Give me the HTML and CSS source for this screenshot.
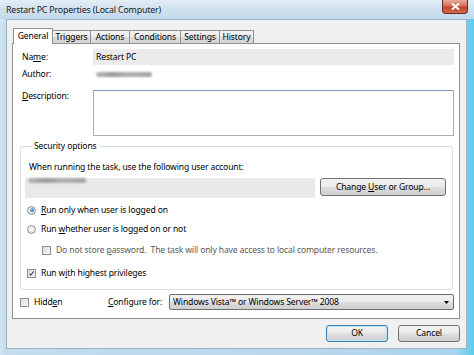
FILE: index.html
```html
<html>
<head>
<meta http-equiv="content-type" content="text/html; charset=utf-8">
<link rel="stylesheet" href="styles.css">
<title>Restart PC Properties (Local Computer)</title>
</head>
<body>
<div class=window>
<div class=titlebar>
<span class=title>Restart PC Properties (Local Computer)</span>
<div class=close><svg width=11 height=9 viewBox="0 0 11 9"><path d="M2 1.5L9 7.5M9 1.5L2 7.5" stroke="#fff" stroke-width="2"/></svg></div>
</div>
<div class=client>
<div class=tabs>
<div class="tab here t1">General</div><div class="tab t2">Triggers</div><div class="tab t3">Actions</div><div class="tab t4">Conditions</div><div class="tab t5">Settings</div><div class="tab t6">History</div>
</div>
<div class=panel>
<div class="row namerow"><span class=label>Na<u>m</u>e:</span><div class="field ro">Restart PC</div></div>
<div class="row authrow"><span class=label>Author:</span><span class="smudge short"></span></div>
<div class="row descrow"><span class=label><u>D</u>escription:</span><div class=memo></div></div>
<fieldset class=group>
<legend>Security options</legend>
<div class=account>When running the task, use the following user account:</div>
<div class=userrow><div class="field user"><span class="smudge long"></span></div><div class="btn change">Change <u>U</u>ser or Group...</div></div>
<div class="opt o1"><span class="radio on"></span><span><u>R</u>un only when user is logged on</span></div>
<div class="opt o2"><span class=radio></span><span>Run <u>w</u>hether user is logged on or not</span></div>
<div class="opt o3 dim"><span class=check></span><span>Do not store <u>p</u>assword.&nbsp; The task will only have access to local computer resources.</span></div>
<div class="opt o4"><span class="check on"><svg width=9 height=9 viewBox="0 0 9 9"><path d="M1.8 4.6L3.6 6.6L7.4 1.8" fill="none" stroke="#3d4e79" stroke-width="1.4"/></svg></span><span>Run w<u>i</u>th highest privileges</span></div>
</fieldset>
<div class=cfgrow>
<div class="opt hidden"><span class=check></span><span>Hidd<u>e</u>n</span></div>
<span class=cfglabel><u>C</u>onfigure for:</span>
<div class=combo><span>Windows Vista™ or Windows Server™ 2008</span><svg width=5 height=3 viewBox="0 0 5 3"><path d="M0 0H5L2.5 3Z" fill="#000"/></svg></div>
</div>
</div>
<div class=buttons>
<div class="btn ok">OK</div>
<div class="btn cancel">Cancel</div>
</div>
</div>
</div>
</body>
</html>
```
FILE: styles.css
```css
html,body{margin:0;padding:0}
body{width:474px;height:355px;overflow:hidden;font-family:"Noto Sans","DejaVu Sans",sans-serif;font-size:8.6px;letter-spacing:-0.15px;color:#000;background:#9fcbe8}
u{text-decoration:underline;text-underline-offset:1px}
.window{width:474px;height:355px;display:flex;flex-direction:column;box-sizing:border-box;
background:linear-gradient(to right,#d4e6f3 0,#c3dcee 6px,#bcd7ec 60%,#a9d4ef 96%,#5ccbee 100%)}
.titlebar{height:19px;flex:none;display:flex;align-items:center;padding-left:6px;
background:linear-gradient(to bottom,#e3eef7 0,#cfe1ef 50%,#c2d9ec 100%)}
.title{font-size:8.8px;line-height:19px;padding-top:2px;color:#1a1a1a}
.close{margin-left:auto;margin-right:6px;align-self:flex-start;width:26px;height:14px;box-sizing:border-box;
border:1px solid #6d2b22;border-top:0;border-radius:0 0 4px 4px;display:flex;align-items:center;justify-content:center;
background:linear-gradient(to bottom,#e9a99c 0,#d6705d 45%,#c2412c 55%,#d26a4d 100%)}
.client{flex:1;margin:0 7px 6px 6px;background:#f0f0f0;border:1px solid #9fb2c2;box-sizing:border-box;
padding:8px 6px 0 5px;display:flex;flex-direction:column}
.tabs{display:flex;align-items:flex-end;height:15px;padding-left:1px}
.tab{box-sizing:border-box;height:13px;line-height:12px;text-align:center;border:1px solid #8d9198;border-bottom:0;
margin-left:-1px;background:linear-gradient(to bottom,#f4f4f4 0,#e9e9e9 50%,#dcdcdc 51%,#d5d5d5 100%)}
.tab.here{height:16px;margin-bottom:-1px;background:#fff;position:relative;z-index:1;line-height:14px;margin-left:0}
.t1{width:40px}.t2{width:39px}.t3{width:40px}.t4{width:52px}.t5{width:40px}.t6{width:35px}
.panel{height:276px;box-sizing:border-box;border:1px solid #8d9198;background:#fff;padding:5px 5px 0 7px}
.row{display:flex}
.label{width:73px;flex:none;padding-left:2px;box-sizing:border-box}
.namerow{height:16px;align-items:center}
.field{background:#ebebeb;flex:1;height:16px;line-height:16px;padding-left:3px}
.authrow{height:16px;margin-top:1px;align-items:center}
.smudge{display:inline-block;height:5px;border-radius:3px;background:linear-gradient(to right,#b8b8b8 0,#9a9a9a 30%,#b0b0b0 60%,#a4a4a4 100%);filter:blur(1.1px)}
.smudge.short{width:56px;margin-left:3px}
.smudge.long{width:58px;margin-left:0;vertical-align:middle}
.descrow{margin-top:8px;height:46px}
.descrow .label{line-height:12px}
.memo{flex:1;height:46px;box-sizing:border-box;border:1px solid #abadb3;border-top-color:#7d99b4;background:#fff}
.group{margin:3px 1px 0 0;padding:7px 6px 9px 6px;border:1px solid #d5dfe5;border-radius:3px}
legend{padding:0 2px;margin-left:5px;line-height:14px}
.account{line-height:14px;padding-left:2px}
.userrow{display:flex;margin-top:4px;height:20px;margin-left:-2px}
.user{flex:none;width:287px;height:20px;line-height:20px;background:#e9e9e9}
.btn{box-sizing:border-box;height:18px;line-height:16px;text-align:center;border:1px solid #707070;border-radius:3px;
background:linear-gradient(to bottom,#f2f2f2 0,#ebebeb 48%,#dddddd 52%,#cfcfcf 100%)}
.change{width:126px;margin-left:5px}
.opt{display:flex;align-items:center;height:14px;gap:5px}
.o1{margin-top:5px;padding-left:0}
.o2{margin-top:5px}
.o3{margin-top:7px;padding-left:15px}
.o4{margin-top:9px;padding-left:0}
.dim{color:#5a5a5a}
.radio{width:9px;height:9px;flex:none;box-sizing:border-box;border-radius:50%;border:1px solid #8e8f8f;
background:radial-gradient(circle at 50% 40%,#fff 0,#e6e6e6 60%,#cfcfcf 100%);display:flex;align-items:center;justify-content:center}
.radio.on::after{content:"";width:4px;height:4px;border-radius:50%;background:radial-gradient(circle at 40% 35%,#9dd3f5 0,#2e76c1 60%,#1b4f8e 100%)}
.check{width:9px;height:9px;flex:none;box-sizing:border-box;border:1px solid #8f8f8f;
background:linear-gradient(135deg,#dcdcdc 0,#f7f7f7 100%);display:flex;align-items:center;justify-content:center}
.check svg{display:block}
.cfgrow{display:flex;align-items:center;height:16px;margin-top:4px}
.hidden{padding-left:0;width:88px;flex:none}
.cfglabel{width:61px;flex:none}
.combo{flex:1;height:16px;box-sizing:border-box;border:1px solid #707070;border-radius:2px;display:flex;align-items:center;
padding:0 4px 0 3px;justify-content:space-between;
background:linear-gradient(to bottom,#f2f2f2 0,#ebebeb 48%,#dddddd 52%,#cfcfcf 100%)}
.buttons{display:flex;justify-content:flex-end;gap:10px;margin-top:6px}
.buttons .btn{width:62px;height:17px;line-height:15px}
.ok{border-color:#3c7fb1;box-shadow:inset 0 0 0 1px #bfe3f7}
```
